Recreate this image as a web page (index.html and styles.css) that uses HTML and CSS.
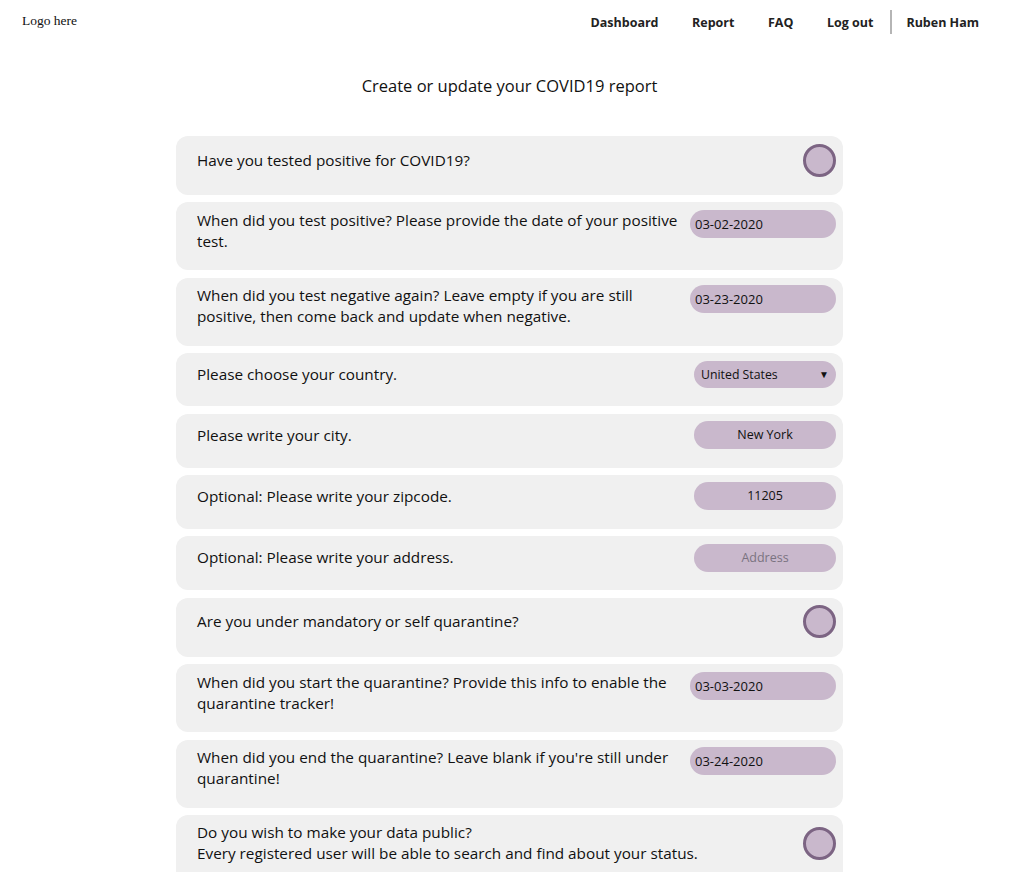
FILE: index.html
```html
<!DOCTYPE html>
<html>
<head>
<meta charset="utf-8">
<link rel="stylesheet" href="styles.css">
</head>
<body>
<header class="topbar">
  <div class="logo">Logo here</div>
  <nav class="nav">
    <a class="nav-link">Dashboard</a>
    <a class="nav-link">Report</a>
    <a class="nav-link">FAQ</a>
    <a class="nav-link">Log out</a>
    <span class="nav-sep"></span>
    <a class="nav-user">Ruben Ham</a>
  </nav>
</header>
<main class="main">
  <h1 class="title">Create or update your COVID19 report</h1>
  <div class="cards">
    <div class="card">
      <div class="q">Have you tested positive for COVID19?</div>
      <span class="toggle"></span>
    </div>
    <div class="card card-top">
      <div class="q">When did you test positive? Please provide the date of your positive test.</div>
      <div class="date">03-02-2020</div>
    </div>
    <div class="card card-top">
      <div class="q">When did you test negative again? Leave empty if you are still positive, then come back and update when negative.</div>
      <div class="date">03-23-2020</div>
    </div>
    <div class="card">
      <div class="q">Please choose your country.</div>
      <div class="select"><span>United States</span><span class="arrow">▼</span></div>
    </div>
    <div class="card">
      <div class="q">Please write your city.</div>
      <div class="text-in">New York</div>
    </div>
    <div class="card">
      <div class="q">Optional: Please write your zipcode.</div>
      <div class="text-in">11205</div>
    </div>
    <div class="card">
      <div class="q">Optional: Please write your address.</div>
      <div class="text-in placeholder">Address</div>
    </div>
    <div class="card">
      <div class="q">Are you under mandatory or self quarantine?</div>
      <span class="toggle"></span>
    </div>
    <div class="card card-top">
      <div class="q">When did you start the quarantine? Provide this info to enable the quarantine tracker!</div>
      <div class="date">03-03-2020</div>
    </div>
    <div class="card card-top">
      <div class="q">When did you end the quarantine? Leave blank if you're still under quarantine!</div>
      <div class="date">03-24-2020</div>
    </div>
    <div class="card">
      <div class="q">Do you wish to make your data public?<br>Every registered user will be able to search and find about your status.</div>
      <span class="toggle"></span>
    </div>
  </div>
</main>
</body>
</html>
```
FILE: styles.css
```css
html, body {
  margin: 0;
  padding: 0;
  background: #ffffff;
}
body {
  font-family: "Open Sans", "Noto Sans", sans-serif;
  color: #111;
  padding-right: 17px;
}
.topbar {
  display: flex;
  justify-content: space-between;
  align-items: flex-start;
  height: 50px;
}
.logo {
  font-family: "Liberation Serif", serif;
  font-size: 13.5px;
  padding: 13px 0 0 22px;
  color: #111;
}
.nav {
  display: flex;
  align-items: center;
  padding: 10px 40px 0 0;
  font-size: 12.5px;
  font-weight: 700;
}
.nav-link {
  margin-left: 33.5px;
  color: #222;
}
.nav-link:first-child {
  margin-left: 0;
}
.nav-sep {
  width: 2px;
  height: 24px;
  background: #b5b5b5;
  margin: 0 14px 0 17px;
}
.nav-user {
  color: #222;
}
.main {
  width: 667px;
  margin: 0 auto;
}
.title {
  font-size: 16.5px;
  font-weight: 400;
  text-align: center;
  margin: 24px 0 38px;
  line-height: 24px;
  color: #111;
}
.cards {
  display: flex;
  flex-direction: column;
  gap: 7.4px;
}
.card {
  background: #f0f0f0;
  border-radius: 12px;
  padding: 7.5px 7px 18.5px 21px;
  display: flex;
  align-items: center;
  gap: 10px;
}
.card-top {
  align-items: flex-start;
}
.q {
  flex: 1;
  font-size: 15.3px;
  line-height: 21px;
}
.toggle {
  width: 27px;
  height: 27px;
  border-radius: 50%;
  border: 3px solid #7c6483;
  background: #c9b8cc;
  flex: none;
}
.date {
  width: 141px;
  height: 28px;
  line-height: 28px;
  border-radius: 14px;
  background: #c9b8cc;
  font-size: 13px;
  padding-left: 5px;
  flex: none;
}
.select {
  width: 128px;
  height: 27px;
  border-radius: 13.5px;
  background: #c9b8cc;
  font-size: 12.3px;
  display: flex;
  align-items: center;
  justify-content: space-between;
  padding: 0 7px 0 7px;
  margin-left: 4px;
  flex: none;
}
.arrow {
  font-size: 10px;
}
.text-in {
  width: 142px;
  height: 28px;
  line-height: 28px;
  border-radius: 14px;
  background: #c9b8cc;
  font-size: 12.5px;
  text-align: center;
  margin-left: 4px;
  flex: none;
}
.placeholder {
  color: #7a7380;
}
```
